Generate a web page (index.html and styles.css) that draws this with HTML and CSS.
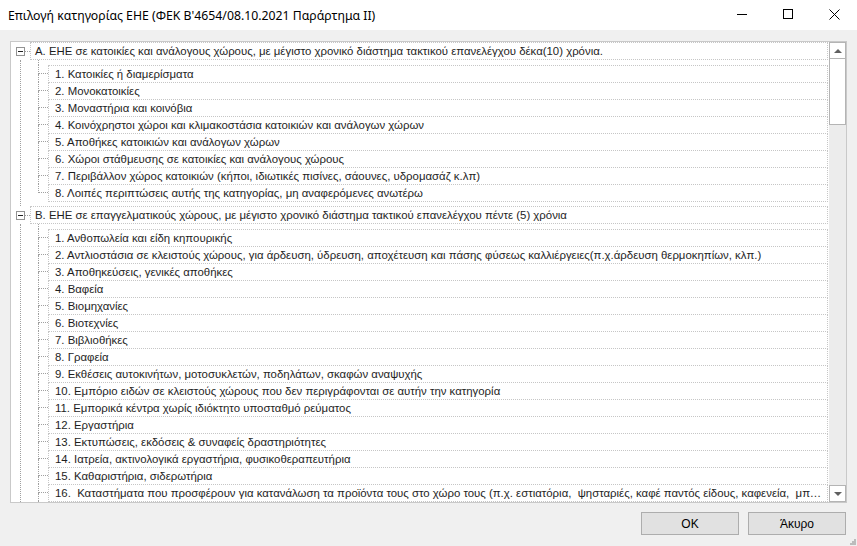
FILE: index.html
```html
<!DOCTYPE html>
<html lang="el">
<head>
  <meta charset="UTF-8" />
  <title>Επιλογή κατηγορίας ΕΗΕ</title>
  <link rel="stylesheet" href="styles.css">
</head>
<body>

  <div class="window">
    <div class="titlebar">
      <span class="title">Επιλογή κατηγορίας ΕΗΕ (ΦΕΚ Β'4654/08.10.2021 Παράρτημα ΙΙ)</span>
      <div class="controls">
        <span class="ctl"><svg width="10" height="10" viewBox="0 0 10 10"><path d="M0 5.5h10" stroke="#000" stroke-width="1"/></svg></span>
        <span class="ctl"><svg width="10" height="10" viewBox="0 0 10 10"><rect x="0.5" y="0.5" width="9" height="9" fill="none" stroke="#000"/></svg></span>
        <span class="ctl"><svg width="11" height="11" viewBox="0 0 11 11"><path d="M0.5 0.5l10 10M10.5 0.5l-10 10" stroke="#000" stroke-width="1"/></svg></span>
      </div>
    </div>

    <div class="content">
      <div class="tree-panel">
        <div class="tree">

          <div class="group">
            <div class="rail">
              <div class="toggle-cell"><span class="toggle"></span><span class="link"></span></div>
              <div class="rail-line"></div>
            </div>
            <div class="group-body">
              <div class="header-box">Α. ΕΗΕ σε κατοικίες και ανάλογους χώρους, με μέγιστο χρονικό διάστημα τακτικού επανελέγχου δέκα(10) χρόνια.</div>
              <div class="children">
                <div class="stem"></div>
                <div class="child"><span class="branch"><i></i><i></i></span><span class="cell">1. Κατοικίες ή διαμερίσματα</span></div>
                <div class="child"><span class="branch"><i></i><i></i></span><span class="cell">2. Μονοκατοικίες</span></div>
                <div class="child"><span class="branch"><i></i><i></i></span><span class="cell">3. Μοναστήρια και κοινόβια</span></div>
                <div class="child"><span class="branch"><i></i><i></i></span><span class="cell">4. Κοινόχρηστοι χώροι και κλιμακοστάσια κατοικιών και ανάλογων χώρων</span></div>
                <div class="child"><span class="branch"><i></i><i></i></span><span class="cell">5. Αποθήκες κατοικιών και ανάλογων χώρων</span></div>
                <div class="child"><span class="branch"><i></i><i></i></span><span class="cell">6. Χώροι στάθμευσης σε κατοικίες και ανάλογους χώρους</span></div>
                <div class="child"><span class="branch"><i></i><i></i></span><span class="cell">7. Περιβάλλον χώρος κατοικιών (κήποι, ιδιωτικές πισίνες, σάουνες, υδρομασάζ κ.λπ)</span></div>
                <div class="child"><span class="branch"><i></i><i></i></span><span class="cell">8. Λοιπές περιπτώσεις αυτής της κατηγορίας, μη αναφερόμενες ανωτέρω</span></div>
              </div>
              <div class="group-gap"></div>
            </div>
          </div>

          <div class="group">
            <div class="rail">
              <div class="toggle-cell"><span class="toggle"></span><span class="link"></span></div>
              <div class="rail-line"></div>
            </div>
            <div class="group-body">
              <div class="header-box">Β. ΕΗΕ σε επαγγελματικούς χώρους, με μέγιστο χρονικό διάστημα τακτικού επανελέγχου πέντε (5) χρόνια</div>
              <div class="children">
                <div class="stem"></div>
                <div class="child"><span class="branch"><i></i><i></i></span><span class="cell">1. Ανθοπωλεία και είδη κηπουρικής</span></div>
                <div class="child"><span class="branch"><i></i><i></i></span><span class="cell">2. Αντλιοστάσια σε κλειστούς χώρους, για άρδευση, ύδρευση, αποχέτευση και πάσης φύσεως καλλιέργειες(π.χ.άρδευση θερμοκηπίων, κλπ.)</span></div>
                <div class="child"><span class="branch"><i></i><i></i></span><span class="cell">3. Αποθηκεύσεις, γενικές αποθήκες</span></div>
                <div class="child"><span class="branch"><i></i><i></i></span><span class="cell">4. Βαφεία</span></div>
                <div class="child"><span class="branch"><i></i><i></i></span><span class="cell">5. Βιομηχανίες</span></div>
                <div class="child"><span class="branch"><i></i><i></i></span><span class="cell">6. Βιοτεχνίες</span></div>
                <div class="child"><span class="branch"><i></i><i></i></span><span class="cell">7. Βιβλιοθήκες</span></div>
                <div class="child"><span class="branch"><i></i><i></i></span><span class="cell">8. Γραφεία</span></div>
                <div class="child"><span class="branch"><i></i><i></i></span><span class="cell">9. Εκθέσεις αυτοκινήτων, μοτοσυκλετών, ποδηλάτων, σκαφών αναψυχής</span></div>
                <div class="child"><span class="branch"><i></i><i></i></span><span class="cell">10. Εμπόριο ειδών σε κλειστούς χώρους που δεν περιγράφονται σε αυτήν την κατηγορία</span></div>
                <div class="child"><span class="branch"><i></i><i></i></span><span class="cell">11. Εμπορικά κέντρα χωρίς ιδιόκτητο υποσταθμό ρεύματος</span></div>
                <div class="child"><span class="branch"><i></i><i></i></span><span class="cell">12. Εργαστήρια</span></div>
                <div class="child"><span class="branch"><i></i><i></i></span><span class="cell">13. Εκτυπώσεις, εκδόσεις &amp; συναφείς δραστηριότητες</span></div>
                <div class="child"><span class="branch"><i></i><i></i></span><span class="cell">14. Ιατρεία, ακτινολογικά εργαστήρια, φυσικοθεραπευτήρια</span></div>
                <div class="child"><span class="branch"><i></i><i></i></span><span class="cell">15. Καθαριστήρια, σιδερωτήρια</span></div>
                <div class="child"><span class="branch"><i></i><i></i></span><span class="cell">16.  Καταστήματα που προσφέρουν για κατανάλωση τα προϊόντα τους στο χώρο τους (π.χ. εστιατόρια,  ψησταριές, καφέ παντός είδους, καφενεία,  μπαρ, κέντρα διασκέδασης κ.λπ)</span></div>
                <div class="child"><span class="branch"><i></i><i></i></span><span class="cell">17. Κομμωτήρια, κουρεία, ινστιτούτα αισθητικής</span></div>
              </div>
            </div>
          </div>

        </div>

        <div class="scrollbar">
          <div class="sb-btn"><span class="arrow-up"></span></div>
          <div class="sb-thumb"></div>
          <div class="sb-track"></div>
          <div class="sb-btn"><span class="arrow-down"></span></div>
        </div>
      </div>

      <div class="footer">
        <button class="button">OK</button>
        <button class="button">Άκυρο</button>
      </div>
    </div>

    <svg class="grip" width="6" height="6" viewBox="0 0 6 6">
      <rect x="4" y="0" width="2" height="2" fill="#bcbcbc"/>
      <rect x="2" y="2" width="2" height="2" fill="#bcbcbc"/>
      <rect x="4" y="2" width="2" height="2" fill="#bcbcbc"/>
      <rect x="0" y="4" width="2" height="2" fill="#bcbcbc"/>
      <rect x="2" y="4" width="2" height="2" fill="#bcbcbc"/>
      <rect x="4" y="4" width="2" height="2" fill="#bcbcbc"/>
    </svg>
  </div>

</body>
</html>
```

FILE: styles.css
```css
* {
  margin: 0;
  padding: 0;
  box-sizing: border-box;
}

body {
  width: 857px;
  height: 546px;
  overflow: hidden;
  background: #f0f0f0;
  font-family: 'Liberation Sans', Arial, sans-serif;
  font-size: 11.4px;
  color: #1e1e1e;
}

.window {
  position: relative;
  height: 100%;
  display: flex;
  flex-direction: column;
}

/* title bar */

.titlebar {
  height: 30px;
  background: #fff;
  display: flex;
  align-items: center;
  justify-content: space-between;
  padding-left: 8px;
}

.title {
  font-family: 'Noto Sans', 'Open Sans', sans-serif;
  font-size: 12.25px;
  color: #000;
}

.controls {
  display: flex;
  height: 100%;
  margin-top: -2px;
}

.ctl {
  width: 46px;
  display: flex;
  align-items: center;
  justify-content: center;
}

/* dialog content */

.content {
  flex: 1;
  display: flex;
  flex-direction: column;
  padding: 11px 10px 11px 10px;
}

.tree-panel {
  height: 462px;
  background: #fff;
  border: 1px solid #c9c9c9;
  display: flex;
  overflow: hidden;
}

.tree {
  flex: 1;
  overflow: hidden;
  padding-right: 1px;
}

.group {
  display: flex;
}

.rail {
  width: 19px;
  display: flex;
  flex-direction: column;
}

.toggle-cell {
  height: 18px;
  display: flex;
  align-items: center;
  padding-left: 5px;
}

.toggle {
  width: 9px;
  height: 9px;
  border: 1px solid #939393;
  background: #fff;
  display: flex;
  align-items: center;
  justify-content: center;
}

.toggle::after {
  content: '';
  width: 5px;
  height: 1px;
  background: #222;
}

.link {
  width: 5px;
  border-top: 1px dotted #a0a0a0;
}

.rail-line {
  flex: 1;
  margin-left: 9px;
  border-left: 1px dotted #a0a0a0;
}

.group-body {
  flex: 1;
  min-width: 0;
}

.header-box {
  height: 18px;
  line-height: 16px;
  padding-left: 4px;
  border: 1px dotted #c6c6c6;
  white-space: nowrap;
  overflow: hidden;
}

.children {
  margin-left: 8px;
}

.stem {
  height: 5px;
  border-left: 1px dotted #a0a0a0;
}

.child {
  display: flex;
  height: 17px;
}

.branch {
  width: 10px;
  display: flex;
  flex-direction: column;
}

.branch i {
  flex: 1;
  border-left: 1px dotted #a0a0a0;
}

.branch i:first-child {
  border-bottom: 1px dotted #a0a0a0;
}

.child:last-child .branch i:last-child {
  border-left: none;
}

.cell {
  flex: 1;
  min-width: 0;
  height: 18px;
  line-height: 16px;
  padding-left: 6px;
  padding-right: 1px;
  border: 1px dotted #c6c6c6;
  white-space: pre;
  overflow: hidden;
  text-overflow: ellipsis;
}

.group-gap {
  height: 5px;
}

/* vertical scrollbar */

.scrollbar {
  width: 17px;
  display: flex;
  flex-direction: column;
  background: #ececec;
}

.sb-btn {
  height: 17px;
  background: #fff;
  border: 1px solid #b4b4b4;
  display: flex;
  align-items: center;
  justify-content: center;
}

.arrow-up,
.arrow-down {
  width: 0;
  height: 0;
  border-left: 4px solid transparent;
  border-right: 4px solid transparent;
}

.arrow-up {
  border-bottom: 4px solid #606060;
}

.arrow-down {
  border-top: 4px solid #606060;
}

.sb-thumb {
  height: 66px;
  background: #fff;
  border: 1px solid #b4b4b4;
  border-top: none;
}

.sb-track {
  flex: 1;
}

/* buttons */

.footer {
  display: flex;
  justify-content: flex-end;
  gap: 9px;
  margin-top: 9px;
  padding-right: 1px;
}

.button {
  width: 98px;
  height: 23px;
  background: #e1e1e1;
  border: 1px solid #adadad;
  font-family: 'Liberation Sans', Arial, sans-serif;
  font-size: 12px;
  color: #000;
}

.grip {
  position: absolute;
  right: 1px;
  bottom: 1px;
}
```
